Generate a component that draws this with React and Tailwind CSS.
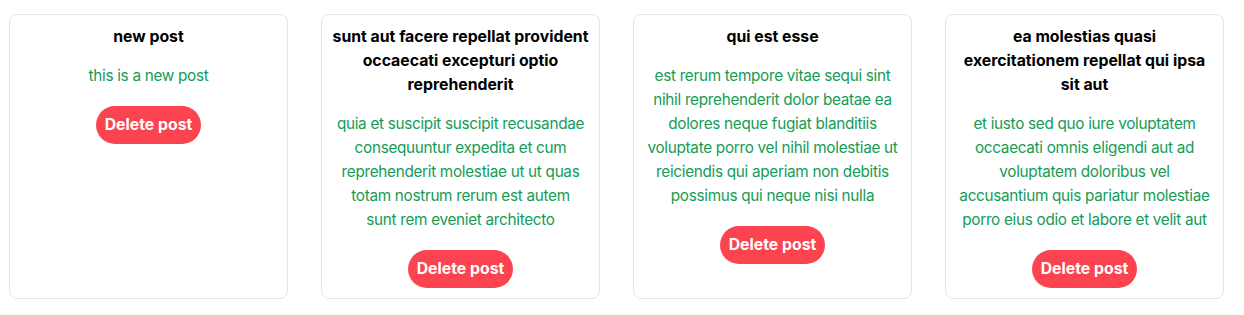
import React from 'react';

const posts = [
    { id: 101, title: 'new post', body: 'this is a new post' },
    {
        id: 1,
        title: 'sunt aut facere repellat provident occaecati excepturi optio reprehenderit',
        body: 'quia et suscipit suscipit recusandae consequuntur expedita et cum reprehenderit molestiae ut ut quas totam nostrum rerum est autem sunt rem eveniet architecto',
    },
    {
        id: 2,
        title: 'qui est esse',
        body: 'est rerum tempore vitae sequi sint nihil reprehenderit dolor beatae ea dolores neque fugiat blanditiis voluptate porro vel nihil molestiae ut reiciendis qui aperiam non debitis possimus qui neque nisi nulla',
    },
    {
        id: 3,
        title: 'ea molestias quasi exercitationem repellat qui ipsa sit aut',
        body: 'et iusto sed quo iure voluptatem occaecati omnis eligendi aut ad voluptatem doloribus vel accusantium quis pariatur molestiae porro eius odio et labore et velit aut',
    },
];

const PostCard = ({ post }) => (
    <div className="flex flex-col items-center px-[9px] pt-[10px] pb-[10px] bg-white border border-[#e5e5e5] rounded-lg text-center">
        <h3 className="mb-[15px] text-[15.8px] leading-6 font-bold text-black">{post.title}</h3>
        <p className="mb-[18px] px-[4.25px] text-[15.3px] leading-6 tracking-[-0.3px] text-[#159b55]">{post.body}</p>
        <button className="h-[38px] px-[9px] text-[15.8px] font-bold text-white bg-[#fb4450] rounded-full">
            Delete post
        </button>
    </div>
);

const App = () => {
    return (
        <div className="min-h-screen bg-white font-['Inter',sans-serif]">
            <div className="grid grid-cols-4 gap-[33px] pl-[9px] pr-[20px] pt-[14px]">
                {posts.map((post) => (
                    <PostCard key={post.id} post={post} />
                ))}
            </div>
        </div>
    );
};

export default App;
